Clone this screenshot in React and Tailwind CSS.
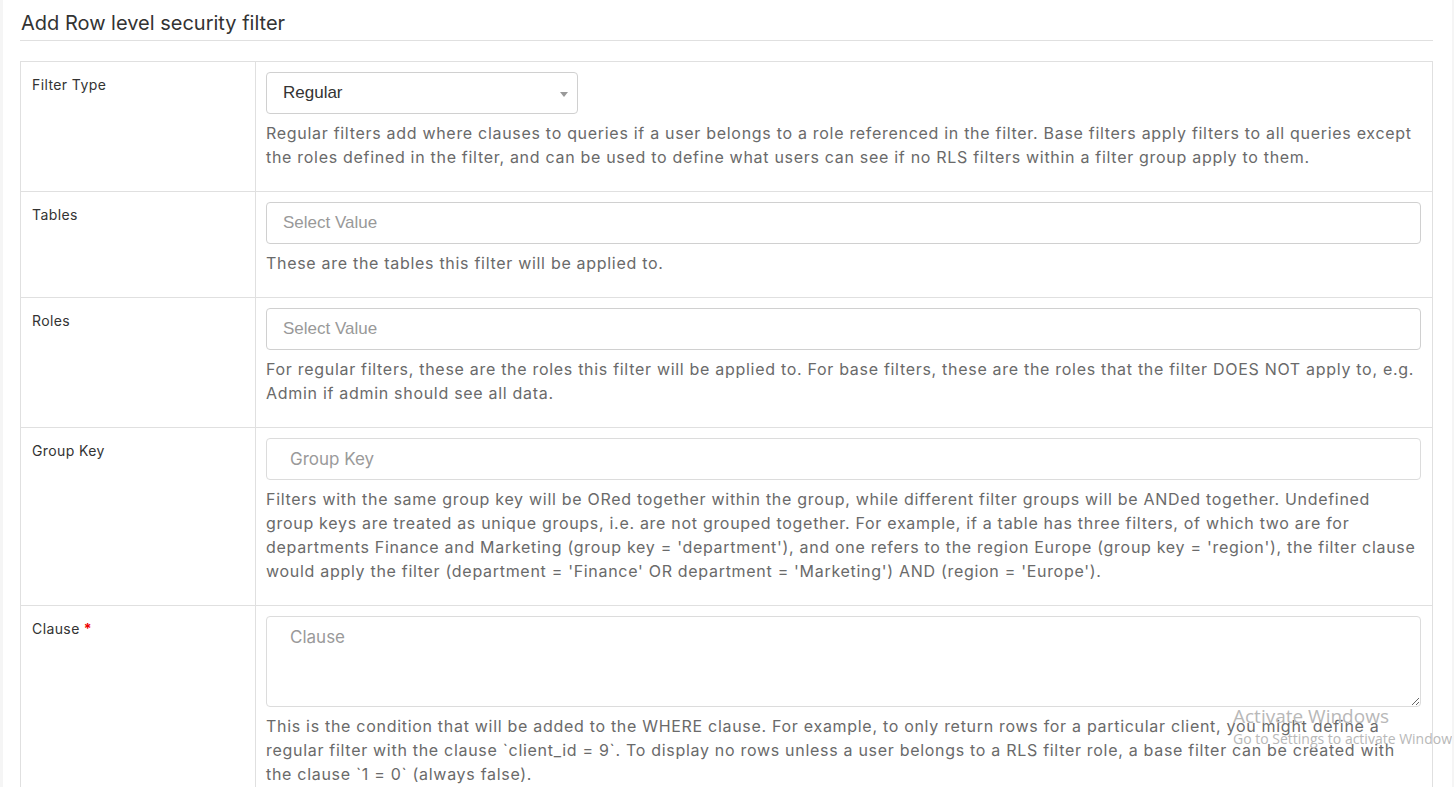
import React from "react";

const rows = [
  {
    label: "Filter Type",
    kind: "select",
    help: "Regular filters add where clauses to queries if a user belongs to a role referenced in the filter. Base filters apply filters to all queries except the roles defined in the filter, and can be used to define what users can see if no RLS filters within a filter group apply to them.",
  },
  {
    label: "Tables",
    kind: "multi",
    help: "These are the tables this filter will be applied to.",
  },
  {
    label: "Roles",
    kind: "multi",
    help: "For regular filters, these are the roles this filter will be applied to. For base filters, these are the roles that the filter DOES NOT apply to, e.g. Admin if admin should see all data.",
  },
  {
    label: "Group Key",
    kind: "input",
    help: "Filters with the same group key will be ORed together within the group, while different filter groups will be ANDed together. Undefined group keys are treated as unique groups, i.e. are not grouped together. For example, if a table has three filters, of which two are for departments Finance and Marketing (group key = 'department'), and one refers to the region Europe (group key = 'region'), the filter clause would apply the filter (department = 'Finance' OR department = 'Marketing') AND (region = 'Europe').",
  },
  {
    label: "Clause",
    kind: "textarea",
    required: true,
    help: "This is the condition that will be added to the WHERE clause. For example, to only return rows for a particular client, you might define a regular filter with the clause `client_id = 9`. To display no rows unless a user belongs to a RLS filter role, a base filter can be created with the clause `1 = 0` (always false).",
  },
];

function Field({ kind, label }) {
  if (kind === "select") {
    return (
      <div className="relative flex h-[42px] w-[312px] items-center rounded-[4px] border border-[#d0d0d0] bg-white pl-4 font-['Liberation_Sans',Arial,sans-serif] text-[17px] text-[#333]">
        Regular
        <span className="absolute right-[9px] top-[19px] h-0 w-0 border-x-[4px] border-t-[5px] border-x-transparent border-t-[#999]" />
      </div>
    );
  }
  if (kind === "multi") {
    return (
      <div className="flex h-[42px] w-full items-center rounded-[4px] border border-[#d0d0d0] bg-white pl-4 font-['Liberation_Sans',Arial,sans-serif] text-[17px] text-[#999]">
        Select Value
      </div>
    );
  }
  if (kind === "input") {
    return (
      <input
        className="block h-[42px] w-full rounded-[4px] border border-[#dcdcdc] bg-white px-[23px] text-[17px] text-[#333] placeholder:text-[#9a9a9a] focus:outline-none"
        placeholder={label}
      />
    );
  }
  return (
    <textarea
      className="block h-[91px] w-full resize-y rounded-[4px] border border-[#dcdcdc] bg-white px-[23px] py-[8px] text-[17px] leading-[24px] text-[#333] placeholder:text-[#9a9a9a] focus:outline-none"
      placeholder={label}
    />
  );
}

export default function App() {
  return (
    <div className="flex min-h-screen bg-[#f5f5f5] font-['Inter','Noto_Sans',sans-serif]">
      <div className="relative ml-[3px] w-[1449px] overflow-hidden bg-white pl-[17px] pr-[19px]">
        <h4 className="border-b border-[#e0e0e0] pb-[3px] pl-[1px] pt-[10px] text-[20px] leading-[27px] text-[#333]">
          Add Row level security filter
        </h4>

        <div className="mt-[20px] w-[1413px] border border-b-0 border-[#e0e0e0]">
          {rows.map((r) => (
            <div key={r.label} className="flex border-b border-[#e0e0e0]">
              <div className="w-[235px] shrink-0 border-r border-[#e0e0e0] pl-[11px] pt-[13px] text-[14px] leading-[20px] tracking-[0.4px] text-[#333]">
                {r.label}
                {r.required && <span className="ml-[4px] font-bold text-[#e00]">*</span>}
              </div>
              <div className="min-w-0 flex-1 pb-[22px] pl-[10px] pr-[11px] pt-[10px]">
                <Field kind={r.kind} label={r.label} />
                <p className="mt-[7px] text-[16px] leading-[24px] tracking-[0.7px] text-[#6a6a6a]">{r.help}</p>
              </div>
            </div>
          ))}
        </div>

        <div className="pointer-events-none absolute left-[1230px] top-[703px] whitespace-nowrap font-['Open_Sans','Noto_Sans',sans-serif] text-[#b8b8b8]">
          <div className="text-[19px] leading-[26px]">Activate Windows</div>
          <div className="text-[14px] leading-[20px]">Go to Settings to activate Windows.</div>
        </div>
      </div>
    </div>
  );
}
